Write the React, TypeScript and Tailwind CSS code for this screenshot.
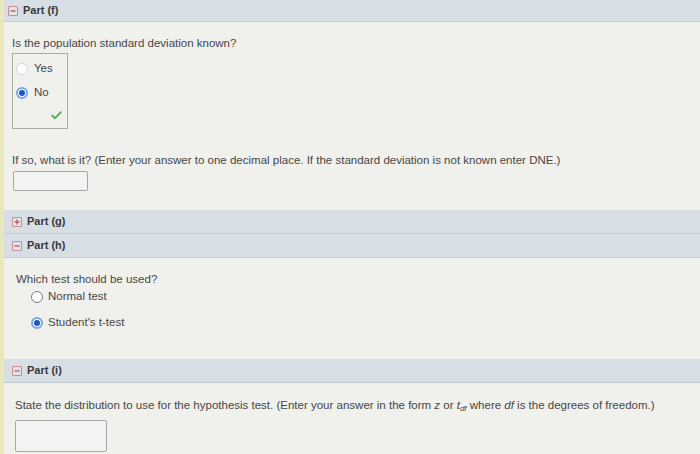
import { Check } from 'lucide-react'

function ToggleIcon({ open }: { open: boolean }) {
  return (
    <span className="w-[10px] h-[10px] border border-[#c98a94] bg-[#e4e4e6] rounded-[1px] flex items-center justify-center">
      <svg width="6" height="6" viewBox="0 0 6 6">
        <path d="M0.5 3h5" stroke="#b0485a" strokeWidth="1.2" />
        {!open && <path d="M3 0.5v5" stroke="#b0485a" strokeWidth="1.2" />}
      </svg>
    </span>
  )
}

function PartHeader({ label, open, className = '' }: { label: string; open: boolean; className?: string }) {
  return (
    <div className={`flex items-center gap-[5px] pl-[8px] bg-[#d7dfe4] border-b border-[#c3cdd3] text-[11px] font-bold text-[#3a3a3a] ${className}`}>
      <ToggleIcon open={open} />
      <span>{label}</span>
    </div>
  )
}

function Radio({ checked, faded }: { checked: boolean; faded?: boolean }) {
  if (checked) {
    return (
      <span className="w-[12px] h-[12px] rounded-full border-[2px] border-[#7aa6e8] bg-white flex items-center justify-center">
        <span className="w-[6px] h-[6px] rounded-full bg-[#1a56c9]" />
      </span>
    )
  }
  return (
    <span
      className={`w-[12px] h-[12px] rounded-full border bg-white ${faded ? 'border-[#d6d6d6]' : 'border-[#7a7a7a]'}`}
    />
  )
}

export default function App() {
  return (
    <div
      className="w-[700px] h-[454px] overflow-hidden bg-[#f0f0ed] border-l-[4px] border-[#e9e6b8] text-[#474747]"
      style={{ fontFamily: '"Liberation Sans", Arial, sans-serif' }}
    >
      {/* Part (f) */}
      <PartHeader label="Part (f)" open className="h-[22px] -ml-[4px] pl-[7px]" />
      <div className="pl-[8px] pt-[14px] text-[11.5px]">
        <p className="leading-[14px]">Is the population standard deviation known?</p>
        <div className="mt-[3px] w-[56px] h-[76px] border border-[#a9a9a9] flex flex-col pt-[7px]">
          <div className="flex items-center gap-[6px] pl-[3px] h-[16px]">
            <Radio checked={false} faded />
            <span>Yes</span>
          </div>
          <div className="flex items-center gap-[6px] pl-[3px] h-[16px] mt-[8px]">
            <Radio checked />
            <span>No</span>
          </div>
          <div className="flex justify-end pr-[4px] mt-[8px]">
            <Check size={13} strokeWidth={3.5} className="text-[#5cae5c]" />
          </div>
        </div>
        <p className="mt-[24px] leading-[14px]">
          If so, what is it? (Enter your answer to one decimal place. If the standard deviation is not known enter DNE.)
        </p>
        <div className="mt-[4px] ml-[1px] w-[75px] h-[20px] border border-[#a8a8a8] bg-[#f3f3f1] rounded-[2px]" />
      </div>

      {/* Part (g) / (h) */}
      <PartHeader label="Part (g)" open={false} className="h-[24px] mt-[19px]" />
      <PartHeader label="Part (h)" open className="h-[24px]" />
      <div className="pl-[12px] pt-[14px] text-[11.5px]">
        <p className="leading-[14px]">Which test should be used?</p>
        <div className="pl-[15px] mt-[4px] flex flex-col gap-[12px]">
          <div className="flex items-center gap-[5px] h-[14px]">
            <Radio checked={false} />
            <span>Normal test</span>
          </div>
          <div className="flex items-center gap-[5px] h-[14px]">
            <Radio checked />
            <span>Student's t-test</span>
          </div>
        </div>
      </div>

      {/* Part (i) */}
      <PartHeader label="Part (i)" open className="h-[24px] mt-[29px]" />
      <div className="pl-[11px] pt-[15px] text-[11.5px]">
        <p className="leading-[14px]">
          State the distribution to use for the hypothesis test. (Enter your answer in the form <i>z</i> or{' '}
          <i>t</i>
          <sub className="text-[8px]">
            <i>df</i>
          </sub>{' '}
          where <i>df</i> is the degrees of freedom.)
        </p>
        <div className="mt-[8px] w-[92px] h-[32px] border border-[#a8a8a8] bg-[#f3f3f1] rounded-[2px]" />
      </div>
    </div>
  )
}
